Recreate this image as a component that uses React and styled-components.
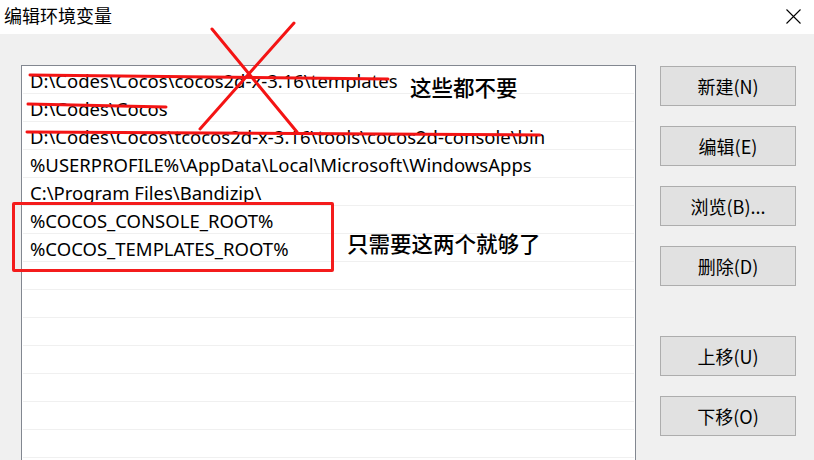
import React from "react";
import styled, { createGlobalStyle } from "styled-components";

const Global = createGlobalStyle`
  html, body { margin: 0; padding: 0; background: #f0f0f0; }
  body { width: 814px; height: 460px; overflow: hidden; font-family: "Noto Sans", "Noto Sans CJK SC", sans-serif; }
  #root { position: relative; width: 814px; height: 460px; overflow: hidden; }
`;

const Window = styled.div`
  position: relative;
  width: 814px;
  height: 460px;
  display: flex;
  flex-direction: column;
  background: #f0f0f0;
`;

const TitleBar = styled.div`
  height: 34px;
  flex: none;
  background: #ffffff;
  display: flex;
  align-items: center;
  justify-content: space-between;
  padding: 0 13px 4px 4px;
  box-sizing: border-box;
`;

const Title = styled.div`
  font-family: "Noto Sans CJK SC", sans-serif;
  font-size: 18px;
  color: #000;
  line-height: 1;
`;

const Close = styled.svg`
  width: 15px;
  height: 15px;
  margin-top: 2px;
`;

const Body = styled.div`
  flex: 1;
  display: flex;
  padding: 31px 0 0 21px;
  gap: 24px;
  overflow: hidden;
`;

const List = styled.div`
  width: 615px;
  box-sizing: border-box;
  flex: none;
  height: 420px;
  background: #fff;
  border: 1px solid #828790;
  padding: 0 1px;
  display: flex;
  flex-direction: column;
`;

const Row = styled.div`
  height: 28px;
  flex: none;
  box-sizing: border-box;
  border-bottom: 1px solid #f0f0f0;
  padding-left: 7px;
  padding-top: 1px;
  display: flex;
  align-items: center;
  font-size: 18.5px;
  color: #000;
  white-space: nowrap;
  overflow: hidden;
`;

const Buttons = styled.div`
  display: flex;
  flex-direction: column;
  width: 136px;
  padding-top: 1px;
`;

const Button = styled.button`
  width: 136px;
  height: 40px;
  margin-top: ${(p) => p.$gap}px;
  box-sizing: border-box;
  background: #e1e1e1;
  border: 1px solid #adadad;
  font-family: "Noto Sans CJK SC", sans-serif;
  font-size: 18px;
  color: #000;
  padding: 0;
`;

const Overlay = styled.svg`
  position: absolute;
  left: 0;
  top: 0;
  width: 814px;
  height: 460px;
  pointer-events: none;
`;

const Highlight = styled.div`
  position: absolute;
  left: 12px;
  top: 202px;
  width: 322px;
  height: 70px;
  box-sizing: border-box;
  border: 3px solid #f41c1c;
  border-radius: 2px;
`;

const Note = styled.div`
  position: absolute;
  left: ${(p) => p.$x}px;
  top: ${(p) => p.$y}px;
  font-family: "Noto Sans CJK SC", serif;
  font-weight: 500;
  font-size: 21.5px;
  line-height: 1;
  color: #000;
  white-space: nowrap;
`;

const rows = [
  "D:\\Codes\\Cocos\\cocos2d-x-3.16\\templates",
  "D:\\Codes\\Cocos",
  "D:\\Codes\\Cocos\\tcocos2d-x-3.16\\tools\\cocos2d-console\\bin",
  "%USERPROFILE%\\AppData\\Local\\Microsoft\\WindowsApps",
  "C:\\Program Files\\Bandizip\\",
  "%COCOS_CONSOLE_ROOT%",
  "%COCOS_TEMPLATES_ROOT%",
];

const buttons = [
  ["新建(N)", 0],
  ["编辑(E)", 20],
  ["浏览(B)...", 20],
  ["删除(D)", 20],
  ["上移(U)", 50],
  ["下移(O)", 20],
];

export default function App() {
  const all = [...rows];
  while (all.length < 15) all.push("");
  return (
    <>
      <Global />
      <Window>
        <TitleBar>
          <Title>编辑环境变量</Title>
          <Close viewBox="0 0 15 15">
            <path d="M0.5 0.5 L14.5 14.5 M14.5 0.5 L0.5 14.5" stroke="#000" strokeWidth="1.1" fill="none" />
          </Close>
        </TitleBar>
        <Body>
          <List>
            {all.map((r, i) => (
              <Row key={i}>{r}</Row>
            ))}
          </List>
          <Buttons>
            {buttons.map(([t, g]) => (
              <Button key={t} $gap={g}>{t}</Button>
            ))}
          </Buttons>
        </Body>
        <Highlight />
        <Note $x={410} $y={76}>这些都不要</Note>
        <Note $x={347} $y={232}>只需要这两个就够了</Note>
        <Overlay viewBox="0 0 814 460">
          <g stroke="#f41414" strokeWidth="3" strokeLinecap="round" fill="none">
            <line x1="212" y1="29" x2="297" y2="132" />
            <line x1="294" y1="23" x2="200" y2="129" />
            <line x1="30" y1="75" x2="388" y2="79" />
            <line x1="28" y1="104" x2="166" y2="107" />
            <line x1="27" y1="132" x2="540" y2="135" />
          </g>
        </Overlay>
      </Window>
    </>
  );
}
